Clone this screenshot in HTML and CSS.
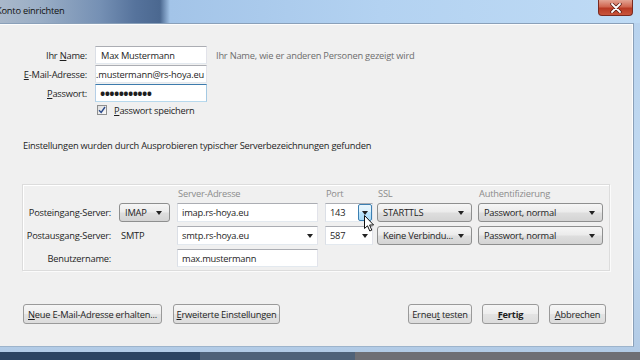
FILE: index.html
```html
<!DOCTYPE html>
<html lang="de">
<head>
    <meta charset="UTF-8">
    <meta name="viewport" content="width=device-width, initial-scale=1.0">
    <title>Konto einrichten</title>
    <link rel="stylesheet" href="styles.css">
</head>
<body>
    <div class="window">
        <div class="titlebar">
            <span class="title">Konto einrichten</span>
            <span class="close">
                <svg width="12" height="10" viewBox="0 0 12 10">
                    <path d="M2 1 L10 9 M10 1 L2 9" stroke="#5a1d14" stroke-width="3.4" stroke-linecap="round"/>
                    <path d="M2 1 L10 9 M10 1 L2 9" stroke="#fff" stroke-width="1.8" stroke-linecap="round"/>
                </svg>
            </span>
        </div>

        <div class="client">
            <div class="identity">
                <label>Ihr <u>N</u>ame:</label>
                <span class="field">Max Mustermann</span>
                <span class="hint">Ihr Name, wie er anderen Personen gezeigt wird</span>

                <label><u>E</u>-Mail-Adresse:</label>
                <span class="field scrolled"><span>max.mustermann@rs-hoya.eu</span></span>
                <span></span>

                <label><u>P</u>asswort:</label>
                <span class="field focused dots">•••••••••••</span>
                <span></span>

                <span></span>
                <span class="check-row">
                    <span class="checkbox">
                        <svg width="8" height="8" viewBox="0 0 8 8"><path d="M1 4.2 L3.2 6.5 L7 1" fill="none" stroke="#2b4a8a" stroke-width="1.4"/></svg>
                    </span>
                    <span><u>P</u>asswort speichern</span>
                </span>
            </div>

            <p class="found">Einstellungen wurden durch Ausprobieren typischer Serverbezeichnungen gefunden</p>

            <div class="servers">
                <span></span>
                <span></span>
                <span class="head">Server-Adresse</span>
                <span class="head">Port</span>
                <span class="head">SSL</span>
                <span class="head">Authentifizierung</span>

                <span class="row-label">Posteingang-Server:</span>
                <span class="combo imap">IMAP <i class="arrow"></i></span>
                <span class="field server">imap.rs-hoya.eu</span>
                <span class="field port">143 <span class="drop hover"><i class="arrow"></i></span></span>
                <span class="combo ssl">STARTTLS <i class="arrow"></i></span>
                <span class="combo auth">Passwort, normal <i class="arrow"></i></span>

                <span class="row-label">Postausgang-Server:</span>
                <span class="plain">SMTP</span>
                <span class="field server">smtp.rs-hoya.eu <span class="drop"><i class="arrow"></i></span></span>
                <span class="field port">587 <span class="drop"><i class="arrow"></i></span></span>
                <span class="combo ssl">Keine Verbindu... <i class="arrow"></i></span>
                <span class="combo auth">Passwort, normal <i class="arrow"></i></span>

                <span class="row-label">Benutzername:</span>
                <span></span>
                <span class="field server">max.mustermann</span>
                <span></span>
                <span></span>
                <span></span>
            </div>

            <div class="actions">
                <button class="btn new-address"><u>N</u>eue E-Mail-Adresse erhalten...</button>
                <button class="btn advanced"><u>E</u>rweiterte Einstellungen</button>
                <span class="spacer"></span>
                <button class="btn retest">Erneu<u>t</u> testen</button>
                <button class="btn primary"><u>F</u>ertig</button>
                <button class="btn cancel"><u>A</u>bbrechen</button>
            </div>
        </div>
    </div>
    <div class="taskbar">
        <span class="task-left"></span>
        <span class="task-mid"></span>
        <span class="task-right"></span>
    </div>

    <svg class="cursor" width="11" height="17" viewBox="0 0 11 17">
        <path d="M0.5 0.5 L0.5 13.5 L3.5 10.8 L5.8 16 L7.8 15.1 L5.6 10 L9.6 10 Z" fill="#fff" stroke="#111" stroke-width="1"/>
    </svg>
</body>
</html>
```

FILE: styles.css
```css
* {
    margin: 0;
    padding: 0;
    box-sizing: border-box;
}

body {
    width: 640px;
    height: 360px;
    overflow: hidden;
    position: relative;
    font-family: "Open Sans", "Noto Sans", sans-serif;
    font-size: 9.3px;
    letter-spacing: -0.22px;
    color: #1e1e1e;
    background-color: #2d4565;
}

u {
    text-decoration: underline;
    text-underline-offset: 1px;
}

/* window frame */

.window {
    height: 352px;
    display: flex;
    flex-direction: column;
    background: linear-gradient(180deg, #b7d2ee 0%, #c4dbf1 60%, #b2cbe6 100%);
}

.titlebar {
    height: 23px;
    flex-shrink: 0;
    display: flex;
    justify-content: space-between;
    align-items: flex-start;
    padding-right: 7px;
    background: linear-gradient(90deg, #a9b8ca 0, #9aaec6 40px, #7590b4 100px, #56739c 135px, #4b6890 160px, #a3c4e8 170px, #b3d2f1 380px, #bfdbf5 640px);
}

.title {
    margin-left: -4px;
    line-height: 22px;
    color: #111;
}

.close {
    width: 35px;
    height: 16px;
    display: flex;
    justify-content: center;
    align-items: center;
    border: 1px solid #7a2a20;
    border-top: none;
    border-radius: 0 0 4px 4px;
    background: linear-gradient(180deg, #e3a493 0%, #d06650 45%, #b83a24 55%, #c9553c 100%);
}

.client {
    flex: 1;
    margin: 0 6px 5px 0;
    padding-top: 22px;
    background-color: #f0f0f0;
    border-top: 1px solid #8aa0b9;
    border-right: 1px solid #8aa0b9;
    border-bottom: 1px solid #9db4cc;
    box-shadow: inset -1px 1px 0 #fdfdfd;
}

/* account identity */

.identity {
    display: grid;
    grid-template-columns: 95px 112px auto;
    grid-template-rows: 18px 18px 18px 14px;
    row-gap: 1px;
    align-items: center;
}

.identity label {
    text-align: right;
    padding-right: 8px;
    white-space: nowrap;
}

.field {
    height: 18px;
    display: flex;
    align-items: center;
    padding: 0 5px;
    background-color: #fff;
    border: 1px solid;
    border-color: #abadb3 #e2e3ea #e3e9ef #dbdfe6;
    white-space: nowrap;
    overflow: hidden;
    position: relative;
}

.field.scrolled {
    justify-content: flex-end;
    padding-right: 2px;
}

.field.focused {
    border-color: #3d7bad #a4c9e3 #b7d9ed #b5cfe7;
}

.field.dots {
    font-size: 14px;
    font-weight: 700;
    letter-spacing: -0.6px;
    padding-left: 4px;
}

.hint {
    margin-left: 9px;
    color: #6d6d6d;
    white-space: nowrap;
}

.check-row {
    grid-column: 2 / 4;
    display: flex;
    align-items: center;
    gap: 7px;
    padding-left: 2px;
}

.checkbox {
    width: 10px;
    height: 10px;
    display: flex;
    justify-content: center;
    align-items: center;
    border: 1px solid #8e8f8f;
    background: linear-gradient(135deg, #dcdcdc, #fbfbfb);
}

.found {
    margin: 22px 0 0 23px;
    line-height: 14px;
}

/* server settings */

.servers {
    width: 588px;
    margin: 31px 0 0 22px;
    padding: 2px 6px 3px 0;
    display: grid;
    grid-template-columns: 96px 58px 148px 52px 101px 125px;
    grid-template-rows: 12px 19px 19px 18px;
    row-gap: 4px;
    align-items: center;
    border: 1px solid #dcdcdc;
    box-shadow: inset 1px 1px 0 #fff, 1px 1px 0 #fbfbfb;
}

.head {
    padding-left: 1px;
    color: #8c8c8c;
}

.row-label {
    text-align: right;
    padding-right: 8px;
    white-space: nowrap;
}

.plain {
    padding-left: 2px;
}

.servers .field {
    height: 100%;
    padding-left: 4px;
}

.server {
    width: 141px;
}

.port {
    width: 48px;
}

.drop {
    position: absolute;
    right: 0;
    top: 0;
    bottom: 0;
    width: 14px;
    display: flex;
    justify-content: center;
    align-items: center;
}

.drop.hover {
    border: 1px solid #3c7fb1;
    border-radius: 2px;
    background: linear-gradient(180deg, #eaf6fd 0%, #d9f0fc 50%, #bee6fd 50%, #a7d9f5 100%);
}

.combo {
    height: 100%;
    display: flex;
    justify-content: space-between;
    align-items: center;
    padding: 0 7px 0 5px;
    border: 1px solid #8e8f8f;
    border-radius: 3px;
    background: linear-gradient(180deg, #f6f6f6 0%, #ebebeb 48%, #dedede 52%, #d4d4d4 100%);
    white-space: nowrap;
}

.imap {
    width: 51px;
}

.ssl {
    width: 95px;
}

.auth {
    width: 125px;
}

.arrow {
    width: 0;
    height: 0;
    border-left: 3.5px solid transparent;
    border-right: 3.5px solid transparent;
    border-top: 4px solid #222;
}

/* buttons */

.actions {
    margin-top: 33px;
    padding: 0 27px 0 23px;
    display: flex;
    gap: 10px;
}

.spacer {
    flex: 1;
}

.btn {
    height: 20px;
    padding: 0;
    font: inherit;
    letter-spacing: inherit;
    white-space: nowrap;
    color: #1e1e1e;
    border: 1px solid #9a9a9a;
    border-radius: 3px;
    background: linear-gradient(180deg, #f6f6f6 0%, #eeeeee 48%, #e3e3e3 52%, #dcdcdc 100%);
}

.new-address {
    width: 139px;
}

.advanced {
    width: 107px;
    margin-left: 1px;
}

.retest {
    width: 64px;
}

.btn.primary {
    width: 57px;
    font-weight: 700;
}

.cancel {
    width: 57px;
}

/* taskbar strip under the window */

.taskbar {
    height: 8px;
    display: flex;
}

.task-left {
    width: 200px;
    background-color: #2c4462;
}

.task-mid {
    width: 155px;
    background-color: #4f6279;
}

.task-right {
    flex: 1;
    background-color: #6e6f75;
}

.cursor {
    position: absolute;
    left: 364px;
    top: 215px;
}
```
